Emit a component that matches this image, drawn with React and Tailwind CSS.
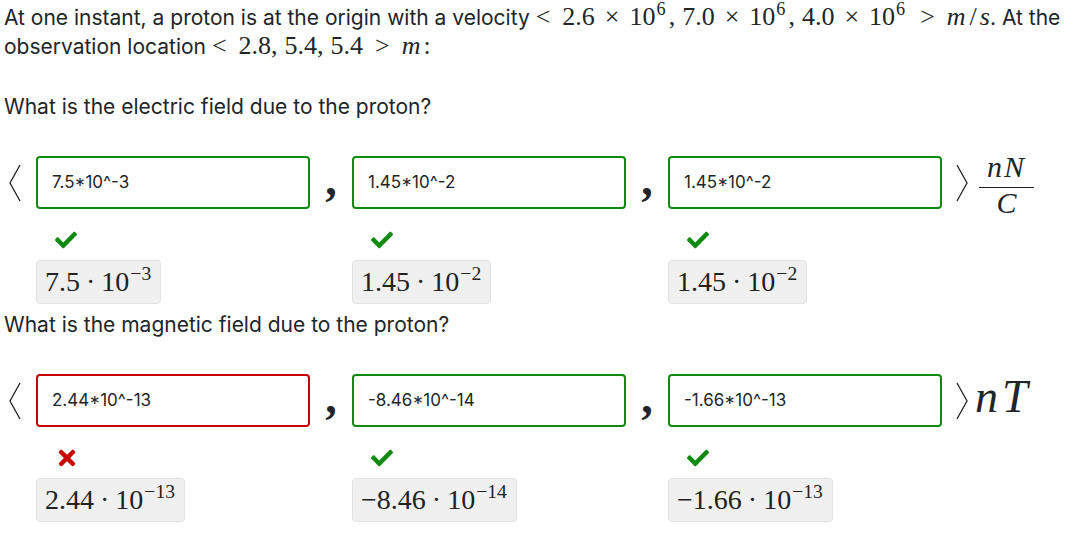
import { FaCheck, FaTimes } from 'react-icons/fa'

const serif = "font-['Liberation_Serif',serif]"

const LeftAngle = () => (
  <svg width="14" height="38" viewBox="0 0 14 38" className="block">
    <polyline points="12,1 2,19 12,37" fill="none" stroke="#222" strokeWidth="1.3" />
  </svg>
)

const RightAngle = () => (
  <svg width="14" height="38" viewBox="0 0 14 38" className="block">
    <polyline points="2,1 12,19 2,37" fill="none" stroke="#222" strokeWidth="1.3" />
  </svg>
)

const Pow = ({ base, exp }) => (
  <span className="whitespace-nowrap">
    {base}
    <sup className="text-[0.7em] leading-none ml-[1px] mr-[3px] relative -top-[0.55em]">{exp}</sup>
  </span>
)

// operators with KaTeX-like spacing
const Rel = ({ children, first }) => (
  <span className={first ? 'mr-[12px]' : 'mx-[12px]'}>{children}</span>
)
const Bin = ({ children }) => <span className="mx-[10px]">{children}</span>
const Punct = () => <span className="mr-[7px]">,</span>

const Sci = ({ m, e }) => (
  <span className="whitespace-nowrap">
    {m}
    <span className="mx-[6px]">·</span>
    <Pow base="10" exp={e} />
  </span>
)

const Answer = ({ value, ok, shown }) => (
  <div className="flex flex-col items-start">
    <div
      className={`w-[274px] h-[53px] border-2 rounded-[4px] flex items-center pl-[14px] text-[17px] text-[#212529] ${
        ok ? 'border-[#0f8a0f]' : 'border-[#c80000]'
      }`}
    >
      {value}
    </div>
    <div className="mt-[19px] h-[24px] flex items-center pl-[19px]">
      {ok ? (
        <FaCheck size={22} className="text-[#0f8a0f]" />
      ) : (
        <FaTimes size={24} className="text-[#c80000]" />
      )}
    </div>
    <div
      className={`mt-[8px] h-[44px] flex items-center pl-[8px] pr-[6px] bg-[#f0f0f0] border border-[#e3e3e3] rounded-[4px] text-[28px] leading-none text-[#222] ${serif}`}
    >
      {shown}
    </div>
  </div>
)

const Comma = () => (
  <div className={`w-[42px] h-[53px] flex justify-center ${serif}`}>
    <span className="text-[46px] leading-none mt-[1px] font-bold">,</span>
  </div>
)

const Row = ({ items, unit }) => (
  <div className="flex items-start">
    <div className="w-[32px] h-[53px] flex items-center pl-[4px]">
      <LeftAngle />
    </div>
    <Answer {...items[0]} />
    <Comma />
    <Answer {...items[1]} />
    <Comma />
    <Answer {...items[2]} />
    <div className="h-[53px] flex items-center pl-[13px]">
      <RightAngle />
      {unit}
    </div>
  </div>
)

const eItems = [
  { value: '7.5*10^-3', ok: true, shown: <Sci m="7.5" e="−3" /> },
  { value: '1.45*10^-2', ok: true, shown: <Sci m="1.45" e="−2" /> },
  { value: '1.45*10^-2', ok: true, shown: <Sci m="1.45" e="−2" /> },
]

const bItems = [
  { value: '2.44*10^-13', ok: false, shown: <Sci m="2.44" e="−13" /> },
  { value: '-8.46*10^-14', ok: true, shown: <Sci m="−8.46" e="−14" /> },
  { value: '-1.66*10^-13', ok: true, shown: <Sci m="−1.66" e="−13" /> },
]

export default function App() {
  return (
    <div className="bg-white min-h-screen pl-[4px] pt-[3px] text-[#212529] font-['Inter',sans-serif] text-[21px] leading-[29px]">
      <p>
        At one instant, a proton is at the origin with a velocity{' '}
        <span className={`${serif} text-[26px] leading-none`}>
          <Rel first>{'<'}</Rel>2.6<Bin>×</Bin>
          <Pow base="10" exp="6" />
          <Punct />7.0<Bin>×</Bin>
          <Pow base="10" exp="6" />
          <Punct />4.0<Bin>×</Bin>
          <Pow base="10" exp="6" />
          <Rel>{'>'}</Rel>
          <i className="mr-[4px]">m</i>
          <span className="mr-[3px]">/</span>
          <i>s</i>
        </span>
        . At the
        <br />
        observation location{' '}
        <span className={`${serif} text-[26px] leading-none`}>
          <Rel first>{'<'}</Rel>2.8<Punct />5.4<Punct />5.4<Rel>{'>'}</Rel>
          <i className="mr-[3px]">m</i>:
        </span>
      </p>

      <p className="mt-[31px]">What is the electric field due to the proton?</p>

      <div className="mt-[35px]">
        <Row
          items={eItems}
          unit={
            <div className={`ml-[10px] mt-[4px] flex flex-col items-center italic text-[30px] leading-none ${serif}`}>
              <span className="pb-[5px] tracking-[2px]">nN</span>
              <span className="w-[55px] h-[1px] bg-[#222]" />
              <span>C</span>
            </div>
          }
        />
      </div>

      <p className="mt-[6px]">What is the magnetic field due to the proton?</p>

      <div className="mt-[35px]">
        <Row
          items={bItems}
          unit={<span className={`ml-[6px] mb-[8px] italic text-[46px] leading-none tracking-[4px] ${serif}`}>nT</span>}
        />
      </div>
    </div>
  )
}
